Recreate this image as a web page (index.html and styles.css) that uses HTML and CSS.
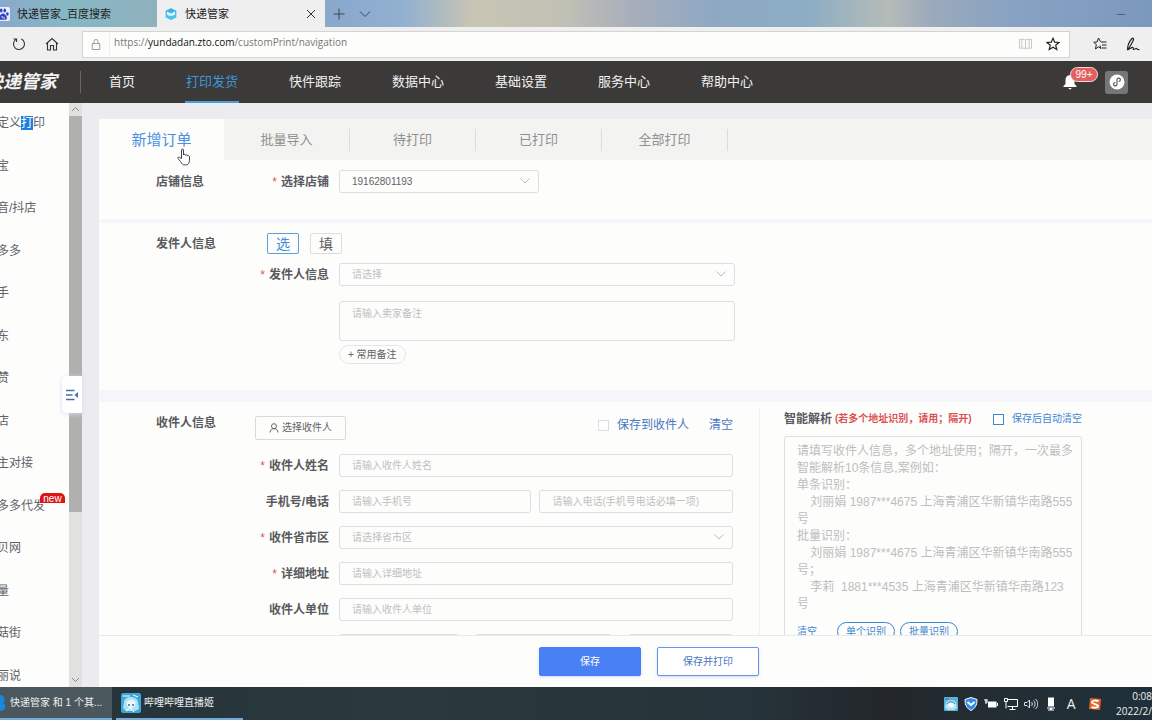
FILE: index.html
```html
<!DOCTYPE html>
<html lang="zh-CN">
<head>
<meta charset="utf-8">
<title>快递管家</title>
<link rel="stylesheet" href="styles.css">
</head>
<body>
<header class="browser">
  <div class="tabstrip">
    <div class="btab btab-first">
      <svg class="paw" viewBox="0 0 16 16" width="14" height="14"><rect width="16" height="16" rx="2" fill="#e8edf8"/><g fill="#2f3fc8"><ellipse cx="3" cy="8" rx="1.500" ry="2"/><ellipse cx="6" cy="4" rx="1.500" ry="2.200"/><ellipse cx="10" cy="4" rx="1.500" ry="2.200"/><ellipse cx="13" cy="8" rx="1.500" ry="2"/><path d="M8 7.500c-2 0-4.500 3-4.500 5 0 2.500 3 2 4.500 2s4.500.5 4.500-2c0-2-2.500-5-4.500-5z"/></g><path d="M6 11h1.500v2M9 11v2h1.500" stroke="#fff" fill="none" stroke-width=".8"/></svg>
      <span>快递管家_百度搜索</span>
    </div>
    <div class="btab btab-active">
      <svg viewBox="0 0 14 14" width="12" height="12"><path d="M7 .8L12.500 3.500v7L7 13.200 1.500 10.500v-7z" fill="#e4f8ff" stroke="#35b5ea" stroke-width="1.400" stroke-linejoin="round"/><path d="M2 3.800L7 1l5 2.800L7 6.500z" fill="#35b5ea"/><path d="M2 7.500c2.500 2 7.500 2 10 0V10.500L7 13 2 10.500z" fill="#4cc3ee"/></svg>
      <span>快递管家</span>
      <button class="plain close" aria-label="关闭"><svg viewBox="0 0 10 10" width="10" height="10"><path d="M1 1l8 8M9 1l-8 8" stroke="#333" fill="none"/></svg></button>
    </div>
    <button class="plain" aria-label="新建标签页"><svg viewBox="0 0 12 12" width="12" height="12"><path d="M6 .5v11M.5 6h11" stroke="#3c4654" fill="none"/></svg></button>
    <button class="plain chev" aria-label="标签页列表"><svg viewBox="0 0 12 12" width="12" height="12"><path d="M1 3.500l5 5 5-5" stroke="#3c4654" fill="none"/></svg></button>
    <button class="plain minimize" aria-label="最小化"><svg viewBox="0 0 10 10" width="10" height="10"><path d="M1 5.500h8" stroke="#4d5f7a" fill="none"/></svg></button>
  </div>
  <div class="addressbar">
    <button class="plain" aria-label="刷新"><svg viewBox="0 0 14 14" width="14" height="14"><path d="M9.300 2A5.500 5.500 0 1 1 4 2.400M4.600 5V2H1.500" stroke="#333" stroke-width="1.100" fill="none"/></svg></button>
    <button class="plain" aria-label="主页"><svg viewBox="0 0 14 14" width="14" height="14"><path d="M1 7l6-5.500L13 7M2.500 6v7h3V8.500h3V13h3V6" stroke="#333" stroke-width="1.100" fill="none"/></svg></button>
    <div class="urlbox">
      <svg viewBox="0 0 12 14" width="10" height="13"><path d="M1.500 6h9v7h-9zM3.500 6V3.500a2.500 2.500 0 0 1 5 0V6" stroke="#888" fill="none"/></svg>
      <div class="url">https://<b>yundadan.zto.com</b>/customPrint/navigation</div>
      <svg viewBox="0 0 14 12" width="13" height="12"><path d="M.5 1H5.500L7 2l1.500-1h5v9.500h-5L7 11.500 5.500 10.500h-5zM7 2v9M3 1v9M11 1v9" stroke="#c4c4c4" fill="none"/></svg>
      <svg viewBox="0 0 14 14" width="14" height="14"><path d="M7 1.300l1.700 3.900 4.300.3-3.300 2.800 1.100 4.200L7 10.200l-3.800 2.300 1.100-4.200L1 5.500l4.300-.3z" stroke="#222" stroke-width="1.200" fill="none"/></svg>
    </div>
    <button class="plain" aria-label="收藏夹"><svg viewBox="0 0 14 14" width="14" height="14"><path d="M8 5H13.500M9 8h4.500M9 11h4.500M7.500 4.800L5.500 1 4 5 .8 5.200 3.300 7.800 2.500 12l3-2.200L8 11.500 7 8.500" stroke="#222" fill="none"/></svg></button>
    <button class="plain" aria-label="笔记"><svg viewBox="0 0 14 14" width="14" height="14"><path d="M1.500 13c0-4 2-9 4.500-11.500C7.500.5 8 2 7 4 5.500 7 3.500 10.500 1.500 13c3-1.500 4.500-3 5.500-2.500s-.5 2 .8 2 1.700-1.500 2.700-1 .5 1.500 3 1" stroke="#222" stroke-width="1.200" fill="none"/></svg></button>
  </div>
</header>

<nav class="topnav">
  <div class="logo"><span>快递管家</span></div>
  <div class="links">
    <a href="#">首页</a><a href="#" class="on">打印发货</a><a href="#">快件跟踪</a><a href="#">数据中心</a><a href="#">基础设置</a><a href="#">服务中心</a><a href="#">帮助中心</a>
  </div>
  <button class="plain bell" aria-label="通知">
    <svg viewBox="0 0 14 16" width="14" height="16"><path d="M7 1C4 1 2.500 3.200 2.500 6v4L.5 12v1h13v-1l-2-2V6C11.500 3.200 10 1 7 1zM5.500 14h3c0 1.700-3 1.700-3 0z" fill="#fff"/></svg>
    <span class="count">99+</span>
  </button>
  <button class="plain mini" aria-label="小程序"><svg viewBox="0 0 16 16" width="16" height="16"><circle cx="8" cy="8" r="7.500" fill="#fff"/><path d="M6.300 8.500a1.700 1.700 0 1 0 1.700 1.700V5.800A1.700 1.700 0 1 1 9.700 7.500" stroke="#555" stroke-width="1.100" fill="none"/></svg></button>
</nav>

<div class="work">
  <aside class="side">
    <ul>
      <li><a href="#">定义<mark>打</mark>印</a></li><li><a href="#">宝</a></li><li><a href="#">音/抖店</a></li><li><a href="#">多多</a></li><li><a href="#">手</a></li><li><a href="#">东</a></li><li><a href="#">赞</a></li><li><a href="#">店</a></li><li><a href="#">主对接</a></li><li><a href="#">多多代发<span class="new">new</span></a></li><li><a href="#">贝网</a></li><li><a href="#">量</a></li><li><a href="#">菇街</a></li><li><a href="#">丽说</a></li>
    </ul>
    <div class="scroll">
      <svg viewBox="0 0 13 13" width="13" height="13"><path d="M3 8l3.500-3.500L10 8" stroke="#888" fill="none"/></svg>
      <div class="track"><div class="thumb"></div></div>
      <svg viewBox="0 0 13 13" width="13" height="13"><path d="M3 4l3.500 3.500L10 4" stroke="#888" fill="none"/></svg>
    </div>
    <button class="plain toggle" aria-label="收起菜单"><svg viewBox="0 0 12 12" width="12" height="12"><path d="M0 1.500h8.500M0 6h6.500M0 10.500h8.500" stroke="#4a6fb0" stroke-width="1.300"/><path d="M12 3v6L8.500 6z" fill="#4a6fb0"/></svg></button>
  </aside>

  <main class="main">
    <div class="tabs">
      <button class="tab tab-on">新增订单</button><button class="tab">批量导入</button><button class="tab">待打印</button><button class="tab">已打印</button><button class="tab">全部打印</button>
      <svg class="hand" viewBox="0 0 14 18" width="14" height="18"><path d="M4.500 10.500V2c0-1.500 2-1.500 2 0v5c.5-1 2-.8 2 .3.700-.8 2-.5 2 .5.800-.6 2-.2 2 1v3.500c0 2.500-1.500 4.700-4 4.700-2.700 0-3.800-1.300-5-3.500L1 10.500c-.5-1.500.8-2 1.700-1z" fill="#fff" stroke="#444"/></svg>
    </div>

    <section class="card shop">
      <div class="row">
        <h2>店铺信息</h2>
        <label class="lab req" for="shop">选择店铺</label>
        <div class="pick pick-short"><select id="shop" class="field"><option>19162801193</option></select><svg viewBox="0 0 10 6" width="10" height="6"><path d="M.5.5L5 5 9.500.5" stroke="#bbb" fill="none"/></svg></div>
      </div>
    </section>

    <section class="card sender">
      <div class="head">
        <h2>发件人信息</h2>
        <button class="mode mode-on">选</button><button class="mode">填</button>
      </div>
      <div class="row">
        <label class="lab req" for="sender">发件人信息</label>
        <div class="pick pick-wide"><select id="sender" class="field empty"><option>请选择</option></select><svg viewBox="0 0 10 6" width="10" height="6"><path d="M.5.5L5 5 9.500.5" stroke="#bbb" fill="none"/></svg></div>
      </div>
      <div class="note">
        <textarea class="field" aria-label="卖家备注" placeholder="请输入卖家备注"></textarea>
        <button class="chip">+ 常用备注</button>
      </div>
    </section>

    <section class="card receiver">
      <form class="form">
        <div class="head">
          <h2>收件人信息</h2>
          <button type="button" class="choose"><svg viewBox="0 0 10 10" width="10" height="10"><circle cx="5" cy="3.200" r="2.500" stroke="#666" fill="none"/><path d="M1 9.500C1.200 7 2.500 5.700 5 5.700S8.800 7 9 9.500" stroke="#666" fill="none"/></svg>选择收件人</button>
          <label class="save"><input type="checkbox">保存到收件人</label>
          <a href="#" class="clear">清空</a>
        </div>
        <div class="row"><label class="lab req" for="name">收件人姓名</label><input id="name" class="field" placeholder="请输入收件人姓名"></div>
        <div class="row"><label class="lab" for="phone">手机号/电话</label><div class="pair"><input id="phone" class="field" placeholder="请输入手机号"><input class="field" aria-label="电话" placeholder="请输入电话(手机号电话必填一项)"></div></div>
        <div class="row"><label class="lab req" for="area">收件省市区</label><div class="pick"><select id="area" class="field empty"><option>请选择省市区</option></select><svg viewBox="0 0 10 6" width="10" height="6"><path d="M.5.5L5 5 9.500.5" stroke="#bbb" fill="none"/></svg></div></div>
        <div class="row"><label class="lab req" for="addr">详细地址</label><input id="addr" class="field" placeholder="请输入详细地址"></div>
        <div class="row"><label class="lab" for="org">收件人单位</label><input id="org" class="field" placeholder="请输入收件人单位"></div>
        <div class="row"><span class="lab"></span><div class="trio"><input class="field" aria-label="数量"><input class="field" aria-label="重量"><input class="field" aria-label="金额"></div></div>
      </form>
      <div class="parse">
        <div class="parse-head">
          <h2>智能解析</h2><span class="hint">(若多个地址识别，请用；隔开)</span>
          <label class="auto"><input type="checkbox">保存后自动清空</label>
        </div>
        <div class="parse-box">
          <textarea aria-label="智能解析" placeholder="请填写收件人信息，多个地址使用；隔开，一次最多&#10;智能解析10条信息,案例如：&#10;单条识别：&#10;    刘丽娟 1987***4675 上海青浦区华新镇华南路555&#10;号&#10;批量识别：&#10;    刘丽娟 1987***4675 上海青浦区华新镇华南路555&#10;号；&#10;    李莉  1881***4535 上海青浦区华新镇华南路123&#10;号"></textarea>
          <div class="parse-actions"><a href="#">清空</a><button class="pill">单个识别</button><button class="pill">批量识别</button></div>
        </div>
      </div>
    </section>

    <footer class="actions">
      <button class="act act-main">保存</button><button class="act">保存并打印</button>
    </footer>
  </main>
</div>

<footer class="taskbar">
  <button class="task task-on"><svg viewBox="0 0 6 18" width="6" height="18"><path d="M0 1c5 0 6 6 3 8 4 1 3 8-3 8z" fill="#1a86e0"/></svg>快递管家 和 1 个其...</button>
  <button class="task task-live"><svg viewBox="0 0 20 20" width="20" height="20"><rect width="20" height="20" rx="2" fill="#3fa6d8"/><path d="M3 9C3 3 16 2 17 9l1 7-4 2H5l-3-3z" fill="#a8e2f5"/><ellipse cx="10" cy="11" rx="4.500" ry="4" fill="#f4f4f8"/><path d="M5 10c1-4 8-5 10 0l-3-2-2 2-1-2z" fill="#d6f5ff"/><circle cx="8" cy="12" r="1" fill="#2678b4"/><circle cx="12" cy="12" r="1" fill="#2678b4"/><path d="M2 3h7M12 2l5 2M5 18l4-3 4 4" stroke="#fff" fill="none"/></svg>哔哩哔哩直播姬</button>
  <div class="tray">
    <svg viewBox="0 0 14 14" width="14" height="14"><rect width="14" height="14" rx="1" fill="#5ab4dc"/><path d="M2 6c1-4 9-4 10 0l1 5-3 2H4l-3-2z" fill="#b5e3f3"/><ellipse cx="7" cy="8" rx="3" ry="2.500" fill="#f2fafd"/><path d="M3 7c2-3 6-3 8 0M1 2h4" stroke="#2f7da8" fill="none"/></svg>
    <svg viewBox="0 0 14 14" width="14" height="14"><path d="M7 .5l6 2c0 6-2 9-6 11-4-2-6-5-6-11z" fill="#2f8af0" stroke="#fff"/><path d="M3.500 5L7 8l3.500-3" stroke="#fff" stroke-width="2" fill="none"/></svg>
    <svg viewBox="0 0 14 14" width="14" height="14"><path d="M4 4.500h8.500v6H4zM13 6h1v3h-1z" fill="#fff"/><path d="M0 3h4M1 5h3M2 2v5" stroke="#fff" fill="none"/></svg>
    <svg viewBox="0 0 14 14" width="14" height="14"><path d="M3.500 2.500h10v7h-10M8.500 9.500v3M5.500 12.500h6M.5 1.500h3v3h-3zM2 4.500v7" stroke="#fff" fill="none"/></svg>
    <svg viewBox="0 0 14 14" width="14" height="14"><path d="M.5 5.500H3L5.500 3v8L3 8.500H.5zM7.500 5c1 1 1 3 0 4M9.500 3.500c2 2 2 5 0 7M11.500 2c3 3 3 7 0 10" stroke="#ddd" fill="none"/></svg>
    <svg viewBox="0 0 14 14" width="14" height="14"><path d="M4 .5h6v9H4zM3 10.500h8v1H8v1h2v1H4v-1h2v-1H3z" fill="#fff"/></svg>
    <span class="ime">A</span>
    <svg class="sogou" viewBox="0 0 14 14" width="14" height="14"><path d="M2 1l11 1-1 11-11-1z" fill="#e8622c"/><path d="M10.500 4C7 3 4 3.500 4 5.300S10 7 10 9s-4 2-6.500 1.200" stroke="#fff" stroke-width="1.900" fill="none"/></svg>
    <div class="clock"><span>0:08</span><span>2022/2/</span></div>
  </div>
</footer>
</body>
</html>
```
FILE: styles.css
```css
* { box-sizing: border-box; }
body {
  margin: 0;
  height: 100vh;
  display: flex;
  flex-direction: column;
  overflow: hidden;
  background: #ebebf0;
  color: #606266;
  font: 12px/18px "Liberation Sans", "Noto Sans CJK SC", sans-serif;
}
button, input, select, textarea { font: inherit; color: inherit; margin: 0; }
a { color: inherit; text-decoration: none; }
svg { display: block; flex: none; }
h2 { margin: 0; font-size: 12px; line-height: 18px; font-weight: 700; color: #58595d; white-space: nowrap; }
.plain { border: 0; background: none; padding: 0; display: flex; align-items: center; justify-content: center; }

/* browser chrome */
.tabstrip {
  height: 27px;
  display: flex;
  align-items: center;
  font-size: 11px;
  color: #222;
  background: linear-gradient(90deg, #8aa9cc 0, #86b8c4 6%, #8fb0bc 14%, #8aa8cc 29%, #92b0d0 35%, #c8c5b4 41%, #c0c0b4 49%, #a8aebb 55%, #8ea8c4 62%, #8badc4 70%, #b5bbb8 77%, #9aaabb 81%, #87a2c2 88%, #7b98bd 100%);
}
.btab { display: flex; align-items: center; height: 100%; white-space: nowrap; }
.btab-first { width: 157px; gap: 7px; overflow: hidden; }
.paw { margin-left: -4px; }
.btab-active { width: 168px; padding: 0 9px 0 8px; gap: 8px; background: #efefef; margin-right: 8px; }
.close { margin-left: auto; }
.chev { margin-left: 14px; }
.minimize { margin-left: auto; margin-right: 26px; }
.addressbar {
  height: 34px;
  display: flex;
  align-items: center;
  padding: 0 12px;
  gap: 19px;
  background: #efefef;
}
.urlbox {
  flex: 1;
  display: flex;
  align-items: center;
  gap: 14px;
  height: 27px;
  margin: 0 4px;
  padding: 0 9px 0 8px;
  border: 1px solid #d4d4d4;
  background: #fdfdfb;
}
.url { flex: 1; color: #777; border-left: 1px solid #eee; padding: 0 0 4px 4px; margin-left: -6px; font: 10px/18px "Open Sans", sans-serif; }
.url b { color: #111; font-weight: 400; }

/* site navigation */
.topnav { height: 42px; display: flex; align-items: center; background: #3b3a38; color: #f2f2f2; padding-right: 24px; }
.logo { width: 81px; height: 22px; padding-right: 23px; border-right: 1px solid #666; display: flex; justify-content: flex-end; align-items: center; overflow: hidden; font-size: 18px; font-weight: 700; font-style: italic; white-space: nowrap; }
.links { display: flex; gap: 49px; margin-left: 27px; height: 100%; flex: 1; }
.links a { padding: 0 1px; font-size: 13px; line-height: 42px; white-space: nowrap; }
.links .on { color: #3f97dc; border-bottom: 2px solid #4a9bd8; }
.bell { position: relative; margin-right: 28px; }
.count { position: absolute; left: 7px; top: -7px; width: 28px; height: 15px; border: 1px solid #fbdada; border-radius: 8px; background: #e36060; color: #fff; font-size: 10px; line-height: 13px; text-align: center; }
.mini { width: 23px; height: 23px; border-radius: 3px; background: #777; }

/* side menu */
.work { flex: 1; min-height: 0; display: flex; }
.side { position: relative; width: 82px; flex: none; display: flex; background: #fdfdfc; }
.side ul { flex: 1; margin: 0 0 0 -3px; padding: 11px 0 2px; list-style: none; display: flex; flex-direction: column; justify-content: space-between; white-space: nowrap; }
.side a { position: relative; }
.side mark { background: #1e80dc; color: #fff; }
.new { position: absolute; left: 43px; top: -6px; width: 25px; height: 10px; overflow: hidden; border-radius: 5px 5px 0 0; background: #dc1414; color: #fff; font-size: 10px; line-height: 12px; text-align: center; }
.scroll { width: 13px; display: flex; flex-direction: column; background: #e1e1e0; }
.track { flex: 1; }
.thumb { height: 71%; background: #b0b0af; }
.toggle { position: absolute; right: 0; top: 273px; width: 20px; height: 37px; border-radius: 5px 0 0 5px; background: #fff; box-shadow: 0 1px 5px #d5deef; }

/* content */
.main { flex: 1; min-width: 0; margin: 16px 0 0 17px; display: flex; flex-direction: column; background: #f5f6fa; }
.tabs { position: relative; height: 41px; flex: none; display: flex; align-items: center; background: #f3f3f2; }
.tab { width: 126px; height: 22px; padding: 0; border: 0; border-right: 1px solid #dcdcdc; background: none; color: #909090; font-size: 13px; line-height: 22px; }
.tab-on { width: 125px; height: 100%; border: 0; background: #fdfdfc; color: #4a90e2; font-size: 15px; }
.hand { position: absolute; left: 78px; top: 29px; }
.card { flex: none; background: #fdfdfc; }
.shop { height: 59px; padding: 10px 0 0 57px; margin-bottom: 4px; }
.sender { height: 167px; padding: 10px 0 0 57px; margin-bottom: 12px; }
.row, .head { display: flex; align-items: center; }
.shop h2 { width: 90px; }
.lab { width: 173px; margin-right: 10px; flex: none; text-align: right; font-weight: 700; color: #58595d; white-space: nowrap; }
.shop .lab { width: 83px; }
.req::before { content: "*"; margin-right: 4px; color: #e05a5a; font-weight: 400; }
.field { display: block; flex: 1; width: 100%; min-width: 0; height: 23px; padding: 0 12px; border: 1px solid #dcdee2; border-radius: 3px; background: #fdfdfc; font-size: 10px; line-height: 16px; appearance: none; outline: 0; }
.field::placeholder { color: #c0c0c0; opacity: 1; }
.empty { color: #c0c0c0; }
.pick { position: relative; flex: 1; }
.pick svg { position: absolute; right: 9px; top: 8px; }
.pick-short { flex: 0 1 200px; }
.pick-wide { flex: 0 1 396px; }
.sender h2 { width: 111px; }
.mode { width: 32px; height: 21px; padding: 0; margin-right: 11px; border: 1px solid #dcdee2; border-radius: 2px; background: #fdfdfc; font-size: 14px; line-height: 18px; }
.mode-on { color: #3f8fd2; border-color: #5a9fd8; }
.sender .row { margin-top: 9px; }
.note { margin: 15px 0 0 183px; max-width: 396px; }
.note textarea { height: 40px; padding: 4px 12px; resize: none; }
.chip { height: 19px; margin-top: 4px; padding: 0 8px; border: 1px solid #e4e6ea; border-radius: 10px; background: #fdfdfc; font-size: 10px; line-height: 16px; }
.receiver { flex: 1; min-height: 0; overflow: hidden; display: grid; grid-template-columns: 660fr 393fr; }
.form { padding: 14px 26px 0 57px; }
.form .head { height: 24px; margin-bottom: 14px; }
.form h2 { width: 99px; align-self: flex-start; margin-top: -2px; }
.choose { display: flex; align-items: center; gap: 3px; height: 24px; padding: 0 13px; border: 1px solid #d8dadd; border-radius: 2px; background: #fdfdfc; font-size: 10px; }
.save, .clear { display: flex; align-items: center; align-self: flex-start; color: #4677c4; }
.save { gap: 8px; margin-left: auto; }
.clear { margin-left: 20px; }
input[type="checkbox"] { appearance: none; width: 11px; height: 11px; border: 1px solid #dcdee2; background: #fff; }
.pair { flex: 1; display: grid; grid-template-columns: 192fr 195fr; gap: 8px; }
.pair .field + .field { padding-left: 13px; }
.form .row { margin-bottom: 13px; }
.trio { flex: 1; display: grid; grid-template-columns: 120fr 137fr 105fr; gap: 16px; }
.parse { display: flex; flex-direction: column; margin-top: 6px; padding: 2px 70px 0 24px; border-left: 1px solid #f0f0f0; }
.parse-head { display: flex; align-items: center; white-space: nowrap; }
.hint { margin-left: 3px; color: #dc5252; font-size: 10px; font-weight: 700; }
.auto { display: flex; align-items: center; gap: 8px; margin-left: auto; color: #3f86d2; font-size: 10px; }
.auto input[type="checkbox"] { border-color: #3f86d2; }
.parse-box { flex: none; height: 220px; margin-top: 8px; border: 1px solid #dcdee2; border-radius: 3px; }
.parse-box textarea { display: block; width: 100%; height: 185px; padding: 6px 0 0 12px; border: 0; resize: none; overflow: hidden; background: none; font-size: 12px; line-height: 17px; white-space: pre; outline: 0; }
.parse-box textarea::placeholder { color: #bebebe; opacity: 1; }
.parse-actions { display: flex; align-items: center; padding-left: 12px; color: #3f86d2; font-size: 10px; }
.parse-actions a { margin-right: 20px; }
.pill { height: 19px; margin-right: 5px; padding: 0 8px; border: 1px solid #3f86d2; border-radius: 10px; background: none; font-size: 10px; line-height: 16px; }
.actions { flex: none; height: 52px; display: flex; gap: 16px; padding: 11px 0 0 440px; border-top: 1px solid #e9e9ea; background: #fdfdfc; }
.act { width: 102px; height: 29px; padding: 0; border: 1px solid #6c94e8; border-radius: 2px; background: #fff; color: #4677c4; font-size: 10px; box-shadow: 0 1px 3px #c9d8f5; }
.act-main { background: #4a80f5; border-color: #4a80f5; color: #fff; }

/* desktop taskbar */
.taskbar { height: 33px; flex: none; display: flex; background: linear-gradient(90deg, #25333b, #2a393b 35%, #26333a 65%, #22262a 77%, #232d33 85%, #1f303a); color: #f0f0f0; font-size: 10px; }
.task { display: flex; align-items: center; border: 0; border-bottom: 2px solid #76aad8; background: none; padding: 0; white-space: nowrap; }
.task-on { width: 112px; gap: 4px; background: #4a585e; margin-right: 4px; }
.task-live { width: 127px; gap: 3px; padding-left: 5px; }
.tray { margin-left: auto; display: flex; align-items: center; gap: 6px; }
.ime { width: 14px; font: 14px/18px "Open Sans", sans-serif; text-align: center; }
.sogou { margin-left: 4px; }
.clock { margin-left: 8px; display: flex; flex-direction: column; align-items: flex-end; font: 10px/15px "Open Sans", sans-serif; }
```
